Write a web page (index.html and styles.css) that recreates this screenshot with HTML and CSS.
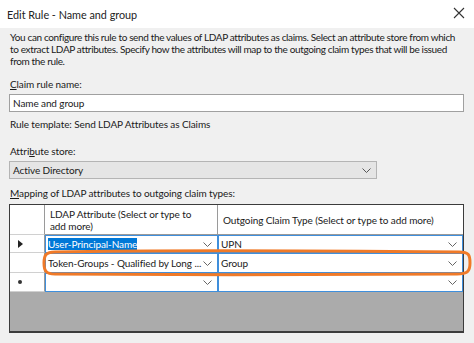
FILE: index.html
```html
<!DOCTYPE html>
<html>
<head>
<meta charset="utf-8">
<link rel="stylesheet" href="styles.css">
</head>
<body>
<div class="window">
  <div class="titlebar">
    <span class="title">Edit Rule - Name and group</span>
    <svg class="close" width="12" height="12" viewBox="0 0 12 12"><path d="M1 1 L11 11 M11 1 L1 11" stroke="#333" stroke-width="1.1" fill="none"/></svg>
  </div>
  <div class="content">
    <p class="desc">You can configure this rule to send the values of LDAP attributes as claims. Select an attribute store from which to extract LDAP attributes. Specify how the attributes will map to the outgoing claim types that will be issued from the rule.</p>
    <label class="lbl lbl-name"><u>C</u>laim rule name:</label>
    <div class="textbox">Name and group</div>
    <div class="lbl lbl-template">Rule template: Send LDAP Attributes as Claims</div>
    <label class="lbl lbl-store">Attri<u>b</u>ute store:</label>
    <div class="combo"><span>Active Directory</span><svg class="chev" width="9" height="5" viewBox="0 0 9 5"><path d="M0.5 0.5 L4.5 4.5 L8.5 0.5" stroke="#555" stroke-width="1" fill="none"/></svg></div>
    <label class="lbl lbl-map"><u>M</u>apping of LDAP attributes to outgoing claim types:</label>
    <div class="gridwrap">
      <div class="grid">
        <div class="hdr rowhdr"></div>
        <div class="hdr col1">LDAP Attribute (Select or type to add more)</div>
        <div class="hdr col2">Outgoing Claim Type (Select or type to add more)</div>

        <div class="rowhdr mark"><svg width="5" height="8" viewBox="0 0 5 8"><path d="M0 0 L5 4 L0 8 Z" fill="#222"/></svg></div>
        <div class="cell"><span class="sel">User-Principal-Name</span><svg class="chev" width="9" height="5" viewBox="0 0 9 5"><path d="M0.5 0.5 L4.5 4.5 L8.5 0.5" stroke="#666" stroke-width="1" fill="none"/></svg></div>
        <div class="cell"><span>UPN</span><svg class="chev" width="9" height="5" viewBox="0 0 9 5"><path d="M0.5 0.5 L4.5 4.5 L8.5 0.5" stroke="#666" stroke-width="1" fill="none"/></svg></div>

        <div class="rowhdr"></div>
        <div class="cell"><span>Token-Groups - Qualified by Long ...</span><svg class="chev" width="9" height="5" viewBox="0 0 9 5"><path d="M0.5 0.5 L4.5 4.5 L8.5 0.5" stroke="#666" stroke-width="1" fill="none"/></svg></div>
        <div class="cell"><span>Group</span><svg class="chev" width="9" height="5" viewBox="0 0 9 5"><path d="M0.5 0.5 L4.5 4.5 L8.5 0.5" stroke="#666" stroke-width="1" fill="none"/></svg></div>

        <div class="rowhdr mark"><span class="dot"></span></div>
        <div class="cell"><span></span><svg class="chev" width="9" height="5" viewBox="0 0 9 5"><path d="M0.5 0.5 L4.5 4.5 L8.5 0.5" stroke="#666" stroke-width="1" fill="none"/></svg></div>
        <div class="cell"><span></span><svg class="chev" width="9" height="5" viewBox="0 0 9 5"><path d="M0.5 0.5 L4.5 4.5 L8.5 0.5" stroke="#666" stroke-width="1" fill="none"/></svg></div>

        <div class="empty"></div>
      </div>
      <svg class="ring" width="432" height="28" viewBox="0 0 432 28"><path d="M14 3 C120 1 300 2 418 3 C428 3 429 6 429 14 C429 23 426 25 416 25 C300 26 140 26 14 25 C5 25 3 22 3 14 C3 6 5 3 14 3 Z" stroke="#f07a28" stroke-width="3" fill="none"/></svg>
    </div>
  </div>
</div>
</body>
</html>
```
FILE: styles.css
```css
html, body {
  margin: 0;
  padding: 0;
}
body {
  width: 474px;
  height: 343px;
  overflow: hidden;
  background: #f0f0f0;
  font-family: Lato, "Liberation Sans", sans-serif;
  font-size: 10px;
  letter-spacing: -0.1px;
  color: #1a1a1a;
}
.window {
  display: flex;
  flex-direction: column;
  height: 343px;
}
.titlebar {
  height: 28px;
  background: #ffffff;
  display: flex;
  align-items: center;
  justify-content: space-between;
  padding: 0 9px 0 7px;
  flex: none;
}
.title {
  font-size: 10.8px;
  letter-spacing: 0;
  color: #222;
}
.close {
  margin-top: -2px;
}
.content {
  padding: 3px 10px 0 9px;
  display: flex;
  flex-direction: column;
}
.desc {
  margin: 0 1px 0 1px;
  line-height: 12px;
  letter-spacing: -0.36px;
}
.lbl {
  display: block;
  line-height: 12px;
  margin-left: 1px;
}
.lbl-name { margin-top: 11px; }
.textbox {
  margin-top: 4px;
  height: 16px;
  line-height: 16px;
  border: 1px solid #a0a0a0;
  background: #fff;
  padding-left: 3px;
}
.lbl-template { margin-top: 6px; }
.lbl-store { margin-top: 15px; }
.combo {
  margin-top: 4px;
  width: 358px;
  height: 16px;
  border: 1px solid #b4b4b4;
  background: #e5e5e5;
  display: flex;
  align-items: center;
  justify-content: space-between;
  padding: 0 5px 0 3px;
  box-sizing: content-box;
}
.combo .chev { flex: none; }
.lbl-map { margin-top: 8px; }
.gridwrap {
  position: relative;
  margin-top: 5px;
}
.grid {
  display: grid;
  grid-template-columns: 35px 173px 1fr;
  grid-template-rows: 30px 18px 20px 19px 42px;
  border: 1px solid #3c3c3c;
  border-bottom-width: 2px;
  background: #ababab;
  height: 129px;
  box-sizing: border-box;
}
.hdr {
  background: #fff;
  border-right: 1px solid #9a9a9a;
  border-bottom: 1px solid #9a9a9a;
  display: flex;
  align-items: center;
  padding-left: 5px;
  padding-right: 8px;
  line-height: 12px;
}
.hdr.col1 { padding-right: 22px; }
.hdr.col2 { border-right: none; }
.rowhdr {
  background: #fff;
  border-right: 1px solid #9a9a9a;
  border-bottom: 1px solid #d0d0d0;
}
.hdr.rowhdr { padding: 0; }
.mark {
  display: flex;
  align-items: center;
  padding-left: 8px;
}
.dot {
  width: 4px;
  height: 4px;
  border-radius: 50%;
  background: #333;
}
.cell {
  background: #fff;
  border: 1px solid #3f8fdc;
  display: flex;
  align-items: center;
  justify-content: space-between;
  padding: 0 5px 0 2px;
  overflow: hidden;
  white-space: nowrap;
}
.cell .chev { flex: none; }
.sel {
  background: #0078d7;
  color: #fff;
}
.empty {
  grid-column: 1 / 4;
}
.ring {
  position: absolute;
  left: 32px;
  top: 45px;
}
```
